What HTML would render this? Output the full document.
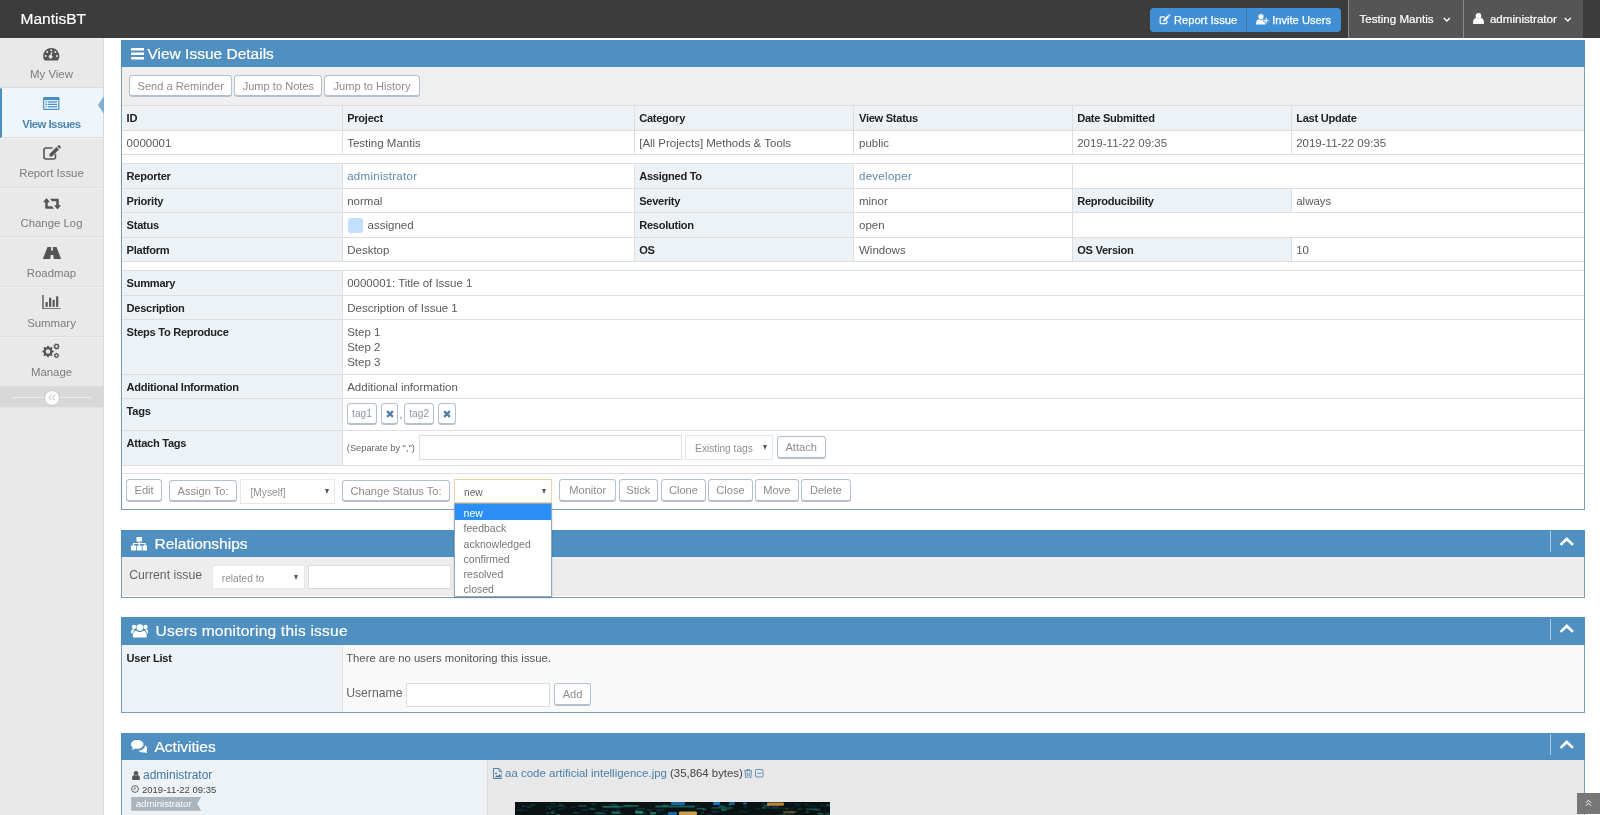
<!DOCTYPE html>
<html lang="en"><head><meta charset="utf-8"><title>0000001: Title of Issue 1 - MantisBT</title>
<style>
*{box-sizing:border-box;margin:0;padding:0}
html,body{width:1600px;height:815px;overflow:hidden;background:#fff}
body{font-family:"Liberation Sans",Arial,sans-serif;font-size:11.5px;color:#555;position:relative}
a{text-decoration:none;color:#5d89ab}
.cell a{letter-spacing:0.28px}
.abs{position:absolute}
#page{position:absolute;left:0;top:0;width:1600px;height:815px;overflow:hidden;will-change:transform}
#navbar{position:absolute;left:0;top:0;width:1600px;height:37.9px;background:#3c3c3c}
#brand{position:absolute;left:20.5px;top:0;line-height:37px;font-size:15.5px;color:#fff;-webkit-text-stroke:0.2px #fff}
.nbtn{position:absolute;top:7.9px;height:24px;background:#408fd5;color:#fff;font-size:11.15px;line-height:24px;white-space:nowrap;-webkit-text-stroke:0.25px #fff}
.nblock{position:absolute;top:0;height:37.9px;background:#555;border-left:1px solid #8a8a8a;color:#fff;font-size:11.6px;line-height:37px;white-space:nowrap;-webkit-text-stroke:0.2px #fff}
#sidebar{position:absolute;left:0;top:37.9px;width:104px;height:778px;background:#e9e9e9;border-right:1px solid #d9d9d9}
.sitem{position:absolute;left:0;width:103px;height:49.75px;border-bottom:1px solid #dcdcdc;border-top:1px solid #f1f1f1;text-align:center;color:#7b7b7b;font-size:11.4px}
.sitem .lbl{position:absolute;left:0;width:103px;text-align:center;top:27.4px;line-height:14px;white-space:nowrap}
.sitem svg{position:absolute}
.sitem.active{background:#eef6fc;color:#4c86b4;border-left:2px solid #4a8fc0;border-top-color:#eef6fc}
.widget{position:absolute;left:121px;width:1464px;border:1px solid #7a9dbb;background:#fff}
.whead{position:absolute;left:-1px;top:-1px;width:1464px;background:#5090c1;color:#fff;font-size:15.5px;white-space:nowrap}
.whead .ttl{position:absolute;top:0;-webkit-text-stroke:0.2px #fff}
.row{position:absolute;left:0;width:1462px;border-top:1px solid #dedede}
.cell{position:absolute;top:0;height:100%;padding:0 0 0 4.6px;white-space:nowrap;border-left:1px solid #dedede;color:#5a5a5a}
.cell.first{border-left:none}
.cat{background:#edf2f6;color:#222;font-weight:bold;letter-spacing:-0.28px;font-size:11.1px}
.t{position:absolute;left:4.6px;top:0;line-height:24px}
.btn{position:absolute;background:#fff;border:1px solid #b4c0cb;border-bottom-width:2px;border-radius:3.5px;color:#8c8c8c;text-align:center;white-space:nowrap;font-size:11.1px}
.sel{position:absolute;background:#fff;border:1px solid #e7e7e7;color:#909090;font-size:10.2px;white-space:nowrap}
.sel .arr{position:absolute;right:5.2px;top:50%;margin-top:-2.5px;width:0;height:0;border-left:2.6px solid transparent;border-right:2.6px solid transparent;border-top:5px solid #555}
.inp{position:absolute;background:#fff;border:1px solid #dedede}
</style></head>
<body>
<div id="page">
<div id="navbar">
<div id="brand">MantisBT</div>
<div class="nbtn" style="left:1150.3px;width:96.3px;border-radius:4px 0 0 4px;border-right:1px solid #3a78b0"><svg width="11.5" height="10.5" viewBox="0 -1.5 21 19.5" style="position:absolute;left:9px;top:6.6px"><path d="M14.5 11V14.5a2 2 0 0 1-2 2H4a2 2 0 0 1-2-2V6a2 2 0 0 1 2-2h6" fill="none" stroke="#fff" stroke-width="2.2" stroke-linecap="round"/><path d="M7.5 9.5 15.6 1.4l3 3L10.5 12.5h-3z M16.6 0.4l1-1a1 1 0 0 1 1.4 0l1.6 1.6a1 1 0 0 1 0 1.4l-1 1z" fill="#fff"/></svg><span style="position:absolute;left:23.7px;top:0">Report Issue</span></div>
<div class="nbtn" style="left:1246.6px;width:94px;border-radius:0 4px 4px 0"><svg width="13" height="10.5" viewBox="0 0 26 21" style="position:absolute;left:9.4px;top:6.6px"><circle cx="10" cy="5.2" r="5.2" fill="#fff"/><path d="M0 19.5c0-6 3-9 6-9 1.2 1 2.5 1.5 4 1.5s2.8-.5 4-1.5c3 0 6 3 6 9 0 1-1 1.5-2 1.5H2c-1 0-2-.5-2-1.5z" fill="#fff"/><path d="M18.5 7.5h3.8v3.8h3.7v3.8h-3.7v3.8h-3.8v-3.8h-3.7v-3.8h3.7z" fill="#fff" stroke="#408fd5" stroke-width="1.4"/></svg><span style="position:absolute;left:25.6px;top:0">Invite Users</span></div>
<div class="nblock" style="left:1348px;width:115.4px"><span style="position:absolute;left:10.5px;top:0">Testing Mantis</span><span style="position:absolute;left:94.2px;top:-1px"><svg width="7.6" height="5" viewBox="0 0 15 10" style=""><path d="M1.5 2 7.5 8l6-6" fill="none" stroke="#fff" stroke-width="2.6"/></svg></span></div>
<div class="nblock" style="left:1463.4px;width:119.8px"><svg width="11" height="11.5" viewBox="0 0 22 23" style="position:absolute;left:9px;top:12.8px"><circle cx="11" cy="5.8" r="5.8" fill="#fff"/><path d="M0 20c0-6.5 3-10 6.5-10 1.3 1.2 2.8 1.8 4.5 1.8s3.2-.6 4.5-1.8c3.5 0 6.5 3.5 6.5 10 0 1.8-1.2 3-3 3H3c-1.8 0-3-1.2-3-3z" fill="#fff"/></svg><span style="position:absolute;left:25.5px;top:0">administrator</span><span style="position:absolute;left:100px;top:-1px"><svg width="7.6" height="5" viewBox="0 0 15 10" style=""><path d="M1.5 2 7.5 8l6-6" fill="none" stroke="#fff" stroke-width="2.6"/></svg></span></div>
</div>
<div id="sidebar">
<div class="sitem" style="top:0.6px"><span style="position:absolute;left:43px;top:9px"><svg width="16.5" height="12.6" viewBox="0 0 36 28" style=""><path d="M18 0a18 18 0 0 0-18 18c0 3.5 1 6.8 2.8 9.5.3.4.7.5 1.2.500h28c.5 0 .9-.1 1.2-.5A18 18 0 0 0 18 0z" fill="#555"/><circle cx="18" cy="5" r="2.2" fill="#e9e9e9"/><circle cx="9" cy="9" r="2.2" fill="#e9e9e9"/><circle cx="5.5" cy="18" r="2.2" fill="#e9e9e9"/><circle cx="27" cy="9" r="2.2" fill="#e9e9e9"/><circle cx="30.5" cy="18" r="2.2" fill="#e9e9e9"/><path d="M20.5 9.5 18.8 16a4 4 0 1 1-2.6-.7L18 8.8z" fill="#e9e9e9"/></svg></span><span class="lbl">My View</span></div>
<div class="sitem active" style="top:50.35px"><span style="position:absolute;left:41.2px;top:7.6px"><svg width="16.5" height="13" viewBox="0 0 34 27" style=""><rect x="0" y="0" width="34" height="27" rx="2.5" fill="#4a8ec2"/><rect x="2.5" y="6.5" width="29" height="18" fill="#eef6fc"/><rect x="5" y="9" width="3" height="2.6" fill="#4a8ec2"/><rect x="10" y="9" width="19" height="2.6" fill="#4a8ec2"/><rect x="5" y="14" width="3" height="2.6" fill="#4a8ec2"/><rect x="10" y="14" width="19" height="2.6" fill="#4a8ec2"/><rect x="5" y="19" width="3" height="2.6" fill="#4a8ec2"/><rect x="10" y="19" width="19" height="2.6" fill="#4a8ec2"/></svg></span><span class="lbl" style="left:-2px;top:27.6px;font-weight:bold;letter-spacing:-0.55px">View Issues</span><span style="position:absolute;right:-1px;top:6.5px;width:0;height:0;border-top:9px solid transparent;border-bottom:9px solid transparent;border-right:6.5px solid #7fb0d0"></span></div>
<div class="sitem" style="top:100.1px"><span style="position:absolute;left:43px;top:6.4px"><svg width="18" height="14.5" viewBox="0 -3 36 29" style=""><path d="M25 16v5a4 4 0 0 1-4 4H6a4 4 0 0 1-4-4V7a4 4 0 0 1 4-4h12" fill="none" stroke="#555" stroke-width="3.2" stroke-linecap="round"/><path d="M13 15 27 1l5 5L18 20h-5z M28.5-.5l2-2a1.5 1.5 0 0 1 2.1 0l2.9 2.9a1.5 1.5 0 0 1 0 2.1l-2 2z" fill="#555"/></svg></span><span class="lbl">Report Issue</span></div>
<div class="sitem" style="top:149.85px"><span style="position:absolute;left:43px;top:9px"><svg width="18" height="11.5" viewBox="0 0 36 23" style=""><path d="M7 0 0 8.5h4.5V20a1.5 1.5 0 0 0 1.5 1.5h16l-4-4.8H9.5V8.5H14z" fill="#555"/><path d="M29 23l7-8.5h-4.5V3A1.5 1.5 0 0 0 30 1.5H14l4 4.8h8.5v8.2H22z" fill="#555"/></svg></span><span class="lbl">Change Log</span></div>
<div class="sitem" style="top:199.6px"><span style="position:absolute;left:43px;top:8.4px"><svg width="18" height="12.5" viewBox="0 0 36 25" style=""><path d="M9 0h7.5l-.6 7h4.2l-.6-7H27l9 23c.3 1-.2 2-1.2 2H21.5l-.9-9h-5.2l-.9 9H1.2C.2 25-.3 24 0 23z" fill="#555"/></svg></span><span class="lbl">Roadmap</span></div>
<div class="sitem" style="top:249.35px"><span style="position:absolute;left:41.5px;top:6.4px"><svg width="19" height="14.6" viewBox="0 0 34 27" style=""><path d="M0 0h2.5v24.5H34V27H0z" fill="#555"/><rect x="6" y="13" width="4" height="9" fill="#555"/><rect x="12.5" y="5" width="4" height="17" fill="#555"/><rect x="19" y="9" width="4" height="13" fill="#555"/><rect x="25.5" y="2.5" width="4" height="19.5" fill="#555"/></svg></span><span class="lbl">Summary</span></div>
<div class="sitem" style="top:299.1px"><span style="position:absolute;left:42.3px;top:5.4px"><svg width="18" height="15" viewBox="0 0 36 30" style=""><path d="M23.44 15.87 L23.44 18.13 L20.58 19.6 L19.91 21.23 L20.89 24.3 L19.3 25.89 L16.23 24.91 L14.6 25.58 L13.13 28.44 L10.87 28.44 L9.4 25.58 L7.77 24.91 L4.7 25.89 L3.11 24.3 L4.09 21.23 L3.42 19.6 L0.56 18.13 L0.56 15.87 L3.42 14.4 L4.09 12.77 L3.11 9.7 L4.7 8.11 L7.77 9.09 L9.4 8.42 L10.87 5.56 L13.13 5.56 L14.6 8.42 L16.23 9.09 L19.3 8.11 L20.89 9.7 L19.91 12.77 L20.58 14.4z" fill="#555"/><circle cx="12" cy="17" r="4.5" fill="#e9e9e9"/><path d="M35.46 6.27 L35.46 7.73 L33.79 8.67 L33.29 9.7 L33.6 11.6 L32.46 12.5 L30.67 11.79 L29.57 12.04 L28.27 13.46 L26.85 13.14 L26.3 11.29 L25.41 10.59 L23.5 10.46 L22.86 9.15 L23.96 7.57 L23.96 6.43 L22.86 4.85 L23.5 3.54 L25.41 3.41 L26.3 2.71 L26.85 0.86 L28.27 0.54 L29.57 1.96 L30.67 2.21 L32.46 1.5 L33.6 2.4 L33.29 4.3 L33.79 5.33z" fill="#555"/><circle cx="29" cy="7" r="2.5" fill="#e9e9e9"/><path d="M34.47 24.38 L34.47 25.62 L33.05 26.42 L32.63 27.28 L32.89 28.89 L31.93 29.66 L30.42 29.05 L29.48 29.26 L28.38 30.47 L27.18 30.19 L26.72 28.63 L25.97 28.03 L24.34 27.93 L23.81 26.82 L24.74 25.48 L24.74 24.52 L23.81 23.18 L24.34 22.07 L25.97 21.97 L26.72 21.37 L27.18 19.81 L28.38 19.53 L29.48 20.74 L30.42 20.95 L31.93 20.34 L32.89 21.11 L32.63 22.72 L33.05 23.58z" fill="#555"/><circle cx="29" cy="25" r="2.2" fill="#e9e9e9"/></svg></span><span class="lbl">Manage</span></div>
<div style="position:absolute;left:0;top:348.9px;width:103px;height:21.5px;background:#d8d8d8;border-bottom:1px solid #e4e4e4"><div style="position:absolute;left:12px;top:10.7px;width:79px;height:1px;background:#ececec"></div><div style="position:absolute;left:43.5px;top:3px;width:16px;height:16px;border-radius:8px;background:#fff;border:1px solid #c9c9c9"></div><svg width="8" height="7" viewBox="0 0 16 14" style="position:absolute;left:47.6px;top:7.6px"><path d="M7 1.5 2 7l5 5.5M14 1.5 9 7l5 5.5" fill="none" stroke="#aaa" stroke-width="1.8"/></svg></div>
</div>
<div class="widget" style="top:40px;height:470px">
<div class="whead" style="height:27px;line-height:27px"><svg width="13.5" height="11.5" viewBox="0 0 27 23" style="position:absolute;left:9.5px;top:8px"><rect y="0" width="27" height="4.8" rx="1" fill="#fff"/><rect y="9" width="27" height="4.8" rx="1" fill="#fff"/><rect y="18" width="27" height="4.8" rx="1" fill="#fff"/></svg><span class="ttl" style="left:26.5px">View Issue Details</span></div>
<div class="abs" style="left:0;top:26px;width:1462px;height:38.5px;background:#efefef;border-bottom:1px solid #d6d6d6"></div>
</div>
<div class="btn" style="left:129px;top:74.7px;width:103.4px;height:22.5px;line-height:20.3px;">Send a Reminder</div>
<div class="btn" style="left:234.4px;top:74.7px;width:88px;height:22.5px;line-height:20.3px;">Jump to Notes</div>
<div class="btn" style="left:324.4px;top:74.7px;width:95.2px;height:22.5px;line-height:20.3px;">Jump to History</div>
<div class="row" style="left:122px;top:104.5px;height:25.5px;width:1462px;"><div class="cell first cat" style="left:0px;width:219.6px"><span class="t" style="line-height:24.4px;">ID</span></div><div class="cell cat" style="left:219.6px;width:292px"><span class="t" style="line-height:24.4px;">Project</span></div><div class="cell cat" style="left:511.6px;width:219.8px"><span class="t" style="line-height:24.4px;">Category</span></div><div class="cell cat" style="left:731.4px;width:218.2px"><span class="t" style="line-height:24.4px;">View Status</span></div><div class="cell cat" style="left:949.6px;width:219px"><span class="t" style="line-height:24.4px;">Date Submitted</span></div><div class="cell cat" style="left:1168.6px;width:293.4px"><span class="t" style="line-height:24.4px;">Last Update</span></div></div>
<div class="row" style="left:122px;top:130px;height:24px;width:1462px;"><div class="cell first" style="left:0px;width:219.6px"><span class="t" style="line-height:24.4px;">0000001</span></div><div class="cell" style="left:219.6px;width:292px"><span class="t" style="line-height:24.4px;">Testing Mantis</span></div><div class="cell" style="left:511.6px;width:219.8px"><span class="t" style="line-height:24.4px;">[All Projects] Methods &amp; Tools</span></div><div class="cell" style="left:731.4px;width:218.2px"><span class="t" style="line-height:24.4px;">public</span></div><div class="cell" style="left:949.6px;width:219px"><span class="t" style="line-height:24.4px;">2019-11-22 09:35</span></div><div class="cell" style="left:1168.6px;width:293.4px"><span class="t" style="line-height:24.4px;">2019-11-22 09:35</span></div></div>
<div class="row" style="left:122px;top:154px;height:9px;width:1462px;"></div>
<div class="row" style="left:122px;top:163px;height:24.8px;width:1462px;"><div class="cell first cat" style="left:0px;width:219.6px"><span class="t" style="line-height:24.4px;">Reporter</span></div><div class="cell" style="left:219.6px;width:292px"><span class="t" style="line-height:24.4px;"><a>administrator</a></span></div><div class="cell cat" style="left:511.6px;width:219.8px"><span class="t" style="line-height:24.4px;">Assigned To</span></div><div class="cell" style="left:731.4px;width:218.2px"><span class="t" style="line-height:24.4px;"><a>developer</a></span></div><div class="cell" style="left:949.6px;width:512.4px"></div></div>
<div class="row" style="left:122px;top:187.8px;height:24.4px;width:1462px;"><div class="cell first cat" style="left:0px;width:219.6px"><span class="t" style="line-height:24.4px;">Priority</span></div><div class="cell" style="left:219.6px;width:292px"><span class="t" style="line-height:24.4px;">normal</span></div><div class="cell cat" style="left:511.6px;width:219.8px"><span class="t" style="line-height:24.4px;">Severity</span></div><div class="cell" style="left:731.4px;width:218.2px"><span class="t" style="line-height:24.4px;">minor</span></div><div class="cell cat" style="left:949.6px;width:219px"><span class="t" style="line-height:24.4px;">Reproducibility</span></div><div class="cell" style="left:1168.6px;width:293.4px"><span class="t" style="line-height:24.4px;">always</span></div></div>
<div class="row" style="left:122px;top:212.2px;height:24.4px;width:1462px;"><div class="cell first cat" style="left:0px;width:219.6px"><span class="t" style="line-height:24.4px;">Status</span></div><div class="cell" style="left:219.6px;width:292px"><span class="abs" style="left:5px;top:4.5px;width:15.5px;height:15.5px;border-radius:2.5px;background:#c2dfff"></span><span class="t" style="line-height:24.4px;left:25px">assigned</span></div><div class="cell cat" style="left:511.6px;width:219.8px"><span class="t" style="line-height:24.4px;">Resolution</span></div><div class="cell" style="left:731.4px;width:218.2px"><span class="t" style="line-height:24.4px;">open</span></div><div class="cell" style="left:949.6px;width:512.4px"></div></div>
<div class="row" style="left:122px;top:236.6px;height:24.4px;width:1462px;"><div class="cell first cat" style="left:0px;width:219.6px"><span class="t" style="line-height:24.4px;">Platform</span></div><div class="cell" style="left:219.6px;width:292px"><span class="t" style="line-height:24.4px;">Desktop</span></div><div class="cell cat" style="left:511.6px;width:219.8px"><span class="t" style="line-height:24.4px;">OS</span></div><div class="cell" style="left:731.4px;width:218.2px"><span class="t" style="line-height:24.4px;">Windows</span></div><div class="cell cat" style="left:949.6px;width:219px"><span class="t" style="line-height:24.4px;">OS Version</span></div><div class="cell" style="left:1168.6px;width:293.4px"><span class="t" style="line-height:24.4px;">10</span></div></div>
<div class="row" style="left:122px;top:261px;height:9.2px;width:1462px;"></div>
<div class="row" style="left:122px;top:270.2px;height:24.6px;width:1462px;"><div class="cell first cat" style="left:0px;width:219.6px"><span class="t" style="line-height:24.4px;">Summary</span></div><div class="cell" style="left:219.6px;width:1242.4px"><span class="t" style="line-height:24.4px;">0000001: Title of Issue 1</span></div></div>
<div class="row" style="left:122px;top:294.8px;height:24.4px;width:1462px;"><div class="cell first cat" style="left:0px;width:219.6px"><span class="t" style="line-height:24.4px;">Description</span></div><div class="cell" style="left:219.6px;width:1242.4px"><span class="t" style="line-height:24.4px;">Description of Issue 1</span></div></div>
<div class="row" style="left:122px;top:319.2px;height:54.6px;width:1462px;"><div class="cell first cat" style="left:0px;width:219.6px"><span class="t" style="line-height:24.4px;">Steps To Reproduce</span></div><div class="cell" style="left:219.6px;width:1242.4px"><span class="t" style="line-height:15.2px;top:4.6px">Step 1<br>Step 2<br>Step 3</span></div></div>
<div class="row" style="left:122px;top:373.8px;height:24px;width:1462px;"><div class="cell first cat" style="left:0px;width:219.6px"><span class="t" style="line-height:24.4px;">Additional Information</span></div><div class="cell" style="left:219.6px;width:1242.4px"><span class="t" style="line-height:24.4px;">Additional information</span></div></div>
<div class="row" style="left:122px;top:397.8px;height:32.2px;width:1462px;"><div class="cell first cat" style="left:0px;width:219.6px"><span class="t" style="line-height:24.4px;">Tags</span></div><div class="cell" style="left:219.6px;width:1242.4px"></div></div>
<div class="row" style="left:122px;top:430px;height:34.6px;width:1462px;"><div class="cell first cat" style="left:0px;width:219.6px"><span class="t" style="line-height:24.4px;">Attach Tags</span></div><div class="cell" style="left:219.6px;width:1242.4px"></div></div>
<div class="row" style="left:122px;top:464.6px;height:8.8px;width:1462px;"></div>
<div class="row" style="left:122px;top:473.4px;height:35.6px;width:1462px;"></div>
<div class="btn" style="left:347px;top:403.1px;width:30px;height:22.1px;line-height:19.6px;font-size:10.2px;color:#8a99a8">tag1</div>
<div class="btn" style="left:380.5px;top:403.1px;width:17.6px;height:22.1px;line-height:19.6px;font-size:10.2px;color:#8a99a8"><svg width="8" height="8" viewBox="0 0 14 14" style="position:absolute;left:4.3px;top:6px"><path d="M2 2l10 10M12 2l-10 10" stroke="#4d7ea8" stroke-width="4"/></svg></div>
<span class="abs" style="left:399.5px;top:409px;font-size:10px;color:#777">,</span>
<div class="btn" style="left:404.2px;top:403.1px;width:30px;height:22.1px;line-height:19.6px;font-size:10.2px;color:#8a99a8">tag2</div>
<div class="btn" style="left:438px;top:403.1px;width:17.6px;height:22.1px;line-height:19.6px;font-size:10.2px;color:#8a99a8"><svg width="8" height="8" viewBox="0 0 14 14" style="position:absolute;left:4.3px;top:6px"><path d="M2 2l10 10M12 2l-10 10" stroke="#4d7ea8" stroke-width="4"/></svg></div>
<span class="abs" style="left:346.8px;top:441.5px;font-size:9.3px;line-height:12px;color:#666;white-space:nowrap">(Separate by ",")</span>
<div class="inp" style="left:419.2px;top:435px;width:262.5px;height:25.2px"></div>
<div class="sel" style="left:684.6px;top:435.1px;width:88.8px;height:25.4px;line-height:24.4px;"><span style="position:absolute;left:9.5px;top:1px">Existing tags</span><span class="arr"></span></div>
<div class="btn" style="left:776.5px;top:436.2px;width:49.4px;height:22.7px;line-height:20.5px;">Attach</div>
<div class="btn" style="left:126.2px;top:479.3px;width:35.8px;height:22.5px;line-height:20.3px;">Edit</div>
<div class="btn" style="left:169.2px;top:479.9px;width:67.8px;height:22.5px;line-height:20.3px;">Assign To:</div>
<div class="sel" style="left:240px;top:479.4px;width:95px;height:24.4px;line-height:23.4px;"><span style="position:absolute;left:9.5px;top:1px">[Myself]</span><span class="arr"></span></div>
<div class="btn" style="left:342px;top:479.9px;width:108px;height:22.5px;line-height:20.3px;">Change Status To:</div>
<div class="sel" style="left:454.4px;top:479.3px;width:97.7px;height:24.2px;line-height:23.2px;border-color:#efd3a8;color:#666"><span style="position:absolute;left:8.6px;top:1px">new</span><span class="arr"></span></div>
<div class="btn" style="left:559.4px;top:479.3px;width:56.7px;height:22.5px;line-height:20.3px;">Monitor</div>
<div class="btn" style="left:618.5px;top:479.3px;width:39.6px;height:22.5px;line-height:20.3px;">Stick</div>
<div class="btn" style="left:660.6px;top:479.3px;width:45.7px;height:22.5px;line-height:20.3px;">Clone</div>
<div class="btn" style="left:708.4px;top:479.3px;width:44.2px;height:22.5px;line-height:20.3px;">Close</div>
<div class="btn" style="left:754.8px;top:479.3px;width:43.9px;height:22.5px;line-height:20.3px;">Move</div>
<div class="btn" style="left:801.2px;top:479.3px;width:49.6px;height:22.5px;line-height:20.3px;">Delete</div>
<div class="widget" style="top:529.5px;height:68px">
<div class="whead" style="height:27.5px;line-height:27.5px"><svg width="16.5" height="13.5" viewBox="0 0 33 27" style="position:absolute;left:9.5px;top:7.5px"><rect x="11" y="0" width="11" height="9" rx="1" fill="#fff"/><rect x="0" y="17" width="10" height="10" rx="1" fill="#fff"/><rect x="11.5" y="17" width="10" height="10" rx="1" fill="#fff"/><rect x="23" y="17" width="10" height="10" rx="1" fill="#fff"/><path d="M5 17v-4h23V17M16.5 9v8" fill="none" stroke="#fff" stroke-width="2.4"/></svg><span class="ttl" style="left:33.5px">Relationships</span><span class="abs" style="left:1428.6px;top:1.5px;width:1px;height:21px;background:#a9cfee"></span><span class="abs" style="left:1438.4px;top:7.4px;line-height:0"><svg width="15.5" height="9.5" viewBox="0 0 30 18" style=""><path d="M3 15 15 3.5 27 15" fill="none" stroke="#fff" stroke-width="5.2"/></svg></span></div>
<div class="abs" style="left:0;top:26.5px;width:1462px;height:39px;background:#ededed"></div>
</div>
<span class="abs" style="left:129.2px;top:567.2px;font-size:12.25px;line-height:16px;color:#666;white-space:nowrap">Current issue</span>
<div class="sel" style="left:211.8px;top:565px;width:92.8px;height:24px;line-height:23px;"><span style="position:absolute;left:9px;top:1px">related to</span><span class="arr"></span></div>
<div class="inp" style="left:307.5px;top:565px;width:143.5px;height:24px"></div>
<div class="widget" style="top:617px;height:95.8px">
<div class="whead" style="height:27.6px;line-height:27.6px"><svg width="17.5" height="14" viewBox="0 0 35 28" style="position:absolute;left:9.5px;top:7px"><circle cx="17.5" cy="7" r="6.5" fill="#fff"/><path d="M6 27c-1.5 0-2.5-1-2.5-2.5 0-7 3-11 7-11 2 1.8 4.3 2.6 7 2.6s5-.8 7-2.6c4 0 7 4 7 11 0 1.5-1 2.5-2.5 2.5z" fill="#fff"/><circle cx="6" cy="6" r="4.3" fill="#fff"/><circle cx="29" cy="6" r="4.3" fill="#fff"/><path d="M0 17c0-4 1.5-6.5 4-6.5 1 .8 2.3 1.3 3.5 1.4-2.5 1.5-4 4-4.5 7H1.5C.6 18.9 0 18.2 0 17zM35 17c0-4-1.5-6.5-4-6.5-1 .8-2.3 1.3-3.5 1.4 2.5 1.5 4 4 4.5 7h1.5c.9 0 1.5-.7 1.5-1.9z" fill="#fff"/></svg><span class="ttl" style="left:34.5px;letter-spacing:0.23px">Users monitoring this issue</span><span class="abs" style="left:1428.6px;top:1.5px;width:1px;height:21px;background:#a9cfee"></span><span class="abs" style="left:1438.4px;top:7.4px;line-height:0"><svg width="15.5" height="9.5" viewBox="0 0 30 18" style=""><path d="M3 15 15 3.5 27 15" fill="none" stroke="#fff" stroke-width="5.2"/></svg></span></div>
<div class="abs" style="left:0;top:26.6px;width:220.5px;height:67.2px;background:#edf2f6;border-right:1px solid #dedede"></div>
<div class="abs" style="left:220.5px;top:26.6px;width:1241.5px;height:67.2px;background:#f9f9f9"></div>
</div>
<span class="abs cat" style="background:none;left:126.6px;top:650px;line-height:16px;white-space:nowrap">User List</span>
<span class="abs" style="left:346.2px;top:650px;line-height:16px;white-space:nowrap;color:#555;font-size:11.3px">There are no users monitoring this issue.</span>
<span class="abs" style="left:346.2px;top:684.5px;font-size:12.2px;line-height:16px;color:#666;white-space:nowrap">Username</span>
<div class="inp" style="left:406.2px;top:682.5px;width:144.3px;height:24px"></div>
<div class="btn" style="left:554px;top:683.3px;width:37px;height:22.6px;line-height:20.4px;">Add</div>
<div class="widget" style="top:732.5px;height:90px;border-bottom:none">
<div class="whead" style="height:27.3px;line-height:27.3px"><svg width="16.5" height="13.5" viewBox="0 0 33 27" style="position:absolute;left:9.5px;top:7.5px"><path d="M12.5 0C5.6 0 0 4 0 9c0 2.6 1.5 5 4 6.6-.4 1.6-1.4 3-2.6 4.1 2.6-.2 5-1.2 6.8-2.7 1.4.3 2.8.5 4.3.5 6.9 0 12.5-4 12.5-9S19.4 0 12.5 0z" fill="#fff"/><path d="M28 11c0 5.5-5.8 10-13 10.5 2 2 5.2 3.3 8.5 3.3 1.2 0 2.4-.2 3.5-.5 1.5 1.3 3.5 2.2 5.8 2.4-1-1-1.8-2.1-2.2-3.5C32.7 21.8 33 20 33 18c0-3-2-5.6-5-7z" fill="#fff"/></svg><span class="ttl" style="left:33.5px">Activities</span><span class="abs" style="left:1428.6px;top:1.5px;width:1px;height:21px;background:#a9cfee"></span><span class="abs" style="left:1438.4px;top:7.4px;line-height:0"><svg width="15.5" height="9.5" viewBox="0 0 30 18" style=""><path d="M3 15 15 3.5 27 15" fill="none" stroke="#fff" stroke-width="5.2"/></svg></span></div>
<div class="abs" style="left:0;top:26.3px;width:366px;height:62.7px;background:#edf2f6;border-right:1px solid #dedede"></div>
<div class="abs" style="left:366px;top:26.3px;width:1096px;height:62.7px;background:#e8e8e8"></div>
</div>
<svg width="8" height="9" viewBox="0 0 16 18" style="position:absolute;left:131.5px;top:770.5px"><circle cx="8" cy="4.5" r="4.5" fill="#555"/><path d="M0 15.5c0-5 2.2-7.5 4.8-7.5 1 .9 2 1.3 3.2 1.3s2.2-.4 3.2-1.3c2.6 0 4.8 2.5 4.8 7.5 0 1.5-1 2.5-2.5 2.5h-11C1 18 0 17 0 15.5z" fill="#555"/></svg>
<a class="abs" style="left:143px;top:767.5px;font-size:12px;line-height:15px;white-space:nowrap;color:#3f79a8">administrator</a>
<svg width="8" height="8" viewBox="0 0 16 16" style="position:absolute;left:131.3px;top:785.3px"><circle cx="8" cy="8" r="6.8" fill="none" stroke="#555" stroke-width="1.8"/><path d="M8 4v4.5H5" fill="none" stroke="#555" stroke-width="1.6"/></svg>
<span class="abs" style="left:142px;top:782.8px;font-size:9.5px;line-height:13px;white-space:nowrap;color:#444">2019-11-22 09:35</span>
<div class="abs" style="left:131.2px;top:796.8px;width:70px;height:14px;background:#a9b4bd;color:#fff;font-size:9.7px;line-height:13.5px;padding-left:4.5px;white-space:nowrap;clip-path:polygon(0 0,100% 0,calc(100% - 4px) 50%,100% 100%,0 100%)">administrator</div>
<svg width="9.5" height="11" viewBox="0 0 19 22" style="position:absolute;left:492.5px;top:768px"><path d="M1 1h11l6 6v14H1z" fill="none" stroke="#3f79a8" stroke-width="1.8"/><path d="M12 1v6h6" fill="none" stroke="#3f79a8" stroke-width="1.5"/><circle cx="6" cy="11" r="1.8" fill="#3f79a8"/><path d="M3.5 18.5l4-4 2 2 3.5-4.5 2.5 3v3.5z" fill="#3f79a8"/></svg>
<a class="abs" style="left:505px;top:766.3px;font-size:11.47px;line-height:15px;white-space:nowrap;color:#4b7fa9">aa code artificial intelligence.jpg</a>
<span class="abs" style="left:670px;top:766.3px;font-size:11.4px;line-height:15px;white-space:nowrap;color:#444">(35,864 bytes)</span>
<svg width="8.5" height="9.5" viewBox="0 0 17 19" style="position:absolute;left:743.6px;top:768.5px"><path d="M0 3.5h17M5.5 3V1h6v2M2.2 4l1 14h10.6l1-14M6.5 7v8M10.5 7v8" fill="none" stroke="#4b7fa9" stroke-width="1.7"/></svg>
<svg width="8.5" height="8.5" viewBox="0 0 17 17" style="position:absolute;left:755.4px;top:769.3px"><rect x="1" y="1" width="15" height="15" rx="2" fill="none" stroke="#4b7fa9" stroke-width="1.7"/><path d="M4.5 8.5h8" stroke="#4b7fa9" stroke-width="1.7"/></svg>
<svg class="abs" style="left:514.8px;top:802.2px" width="315.4" height="13" viewBox="0 0 315.4 13"><rect width="316" height="13" fill="#0a1214"/><rect x="141.1" y="7.4" width="8.5" height="1.6" fill="#0f3d46" opacity="0.72"/><rect x="59.2" y="10.2" width="5.3" height="1.7" fill="#1a6a62" opacity="0.3"/><rect x="94.7" y="2" width="7.7" height="1.8" fill="#14524f" opacity="0.58"/><rect x="123.6" y="6.2" width="7.2" height="1.8" fill="#0f3d46" opacity="0.26"/><rect x="164.9" y="1.7" width="3.3" height="1.3" fill="#14524f" opacity="0.68"/><rect x="101.8" y="7.8" width="3.4" height="1.3" fill="#11485c" opacity="0.52"/><rect x="206.7" y="6.3" width="3.9" height="2.2" fill="#14524f" opacity="0.64"/><rect x="98.4" y="3.6" width="4" height="1.1" fill="#14524f" opacity="0.47"/><rect x="264.1" y="5.4" width="8.7" height="2" fill="#14524f" opacity="0.37"/><rect x="289.2" y="1.6" width="4.6" height="1.9" fill="#1d7468" opacity="0.29"/><rect x="196.4" y="10" width="3.9" height="1.1" fill="#11485c" opacity="0.26"/><rect x="127.9" y="11.6" width="2.9" height="1.8" fill="#14524f" opacity="0.28"/><rect x="248.7" y="3" width="5.9" height="1.5" fill="#1a6a62" opacity="0.79"/><rect x="240.1" y="5.8" width="4.7" height="1.5" fill="#1a6a62" opacity="0.25"/><rect x="269.7" y="12.2" width="6.1" height="2.2" fill="#14524f" opacity="0.37"/><rect x="123" y="10.8" width="6.5" height="1.1" fill="#1a6a62" opacity="0.37"/><rect x="80.6" y="9.9" width="4.3" height="1.4" fill="#14524f" opacity="0.29"/><rect x="65.1" y="8.3" width="2.1" height="1.4" fill="#0f3d46" opacity="0.5"/><rect x="299.3" y="6.6" width="6" height="2" fill="#1a6a62" opacity="0.59"/><rect x="97" y="3.6" width="6.3" height="1.9" fill="#1a6a62" opacity="0.66"/><rect x="293.4" y="3.3" width="8.7" height="2.1" fill="#0f3d46" opacity="0.29"/><rect x="14.8" y="2.3" width="5.6" height="1.3" fill="#17605a" opacity="0.64"/><rect x="80.2" y="10.5" width="6.2" height="1.4" fill="#1a6a62" opacity="0.76"/><rect x="304.9" y="2.5" width="5.4" height="1.8" fill="#0f3d46" opacity="0.59"/><rect x="87.4" y="11.5" width="3.4" height="1" fill="#11485c" opacity="0.48"/><rect x="77.7" y="1.5" width="4" height="1.6" fill="#1a6a62" opacity="0.3"/><rect x="43.2" y="6.2" width="4.3" height="1.9" fill="#0f3d46" opacity="0.57"/><rect x="43.8" y="1.4" width="2.1" height="2.1" fill="#17605a" opacity="0.42"/><rect x="10.5" y="7.9" width="2.5" height="1.1" fill="#11485c" opacity="0.43"/><rect x="311.8" y="1.9" width="5.8" height="1.9" fill="#17605a" opacity="0.66"/><rect x="40.4" y="12.1" width="4.4" height="1.1" fill="#1d7468" opacity="0.75"/><rect x="271.8" y="5.8" width="7.5" height="2" fill="#0f3d46" opacity="0.26"/><rect x="206.6" y="5.4" width="2.1" height="1.1" fill="#14524f" opacity="0.6"/><rect x="309.9" y="11.1" width="7.1" height="1.5" fill="#17605a" opacity="0.63"/><rect x="142.8" y="6.3" width="5.8" height="1.6" fill="#0f3d46" opacity="0.27"/><rect x="187.6" y="6.5" width="3.6" height="1.8" fill="#1d7468" opacity="0.68"/><rect x="206" y="6.6" width="8.3" height="1.4" fill="#1a6a62" opacity="0.62"/><rect x="63.2" y="3" width="8.3" height="1.8" fill="#1d7468" opacity="0.52"/><rect x="75.3" y="5.7" width="3.8" height="1.8" fill="#1a6a62" opacity="0.73"/><rect x="119.9" y="7.7" width="4.2" height="1.2" fill="#1d7468" opacity="0.44"/><rect x="279.4" y="1.5" width="2.4" height="2.2" fill="#1a6a62" opacity="0.31"/><rect x="147.1" y="11.6" width="7.8" height="1.5" fill="#0f3d46" opacity="0.52"/><rect x="98.4" y="10.6" width="8.9" height="1.5" fill="#14524f" opacity="0.71"/><rect x="86.8" y="8" width="6.7" height="1.3" fill="#11485c" opacity="0.42"/><rect x="247" y="1.2" width="3" height="1.5" fill="#14524f" opacity="0.67"/><rect x="83.1" y="10" width="7.6" height="2.2" fill="#14524f" opacity="0.5"/><rect x="196.5" y="8.5" width="7.7" height="2.2" fill="#17605a" opacity="0.36"/><rect x="257" y="3.9" width="7" height="1.9" fill="#0f3d46" opacity="0.64"/><rect x="55.9" y="4.1" width="4.4" height="1.8" fill="#0f3d46" opacity="0.53"/><rect x="311" y="2.8" width="7.9" height="1.8" fill="#1a6a62" opacity="0.3"/><rect x="291" y="9.3" width="2.9" height="1.5" fill="#17605a" opacity="0.74"/><rect x="2.1" y="7.3" width="6.6" height="1.6" fill="#11485c" opacity="0.51"/><rect x="203.2" y="3.4" width="7.1" height="2" fill="#17605a" opacity="0.76"/><rect x="38.5" y="3.8" width="4.7" height="1.1" fill="#11485c" opacity="0.55"/><rect x="246.7" y="4.7" width="8.4" height="2" fill="#11485c" opacity="0.53"/><rect x="11.6" y="4.9" width="4.9" height="1.3" fill="#14524f" opacity="0.37"/><rect x="270.7" y="5.9" width="2.2" height="1.6" fill="#17605a" opacity="0.68"/><rect x="43.8" y="2.7" width="5.6" height="1.9" fill="#17605a" opacity="0.63"/><rect x="295.1" y="6.7" width="8.6" height="1.1" fill="#1a6a62" opacity="0.49"/><rect x="174.3" y="10.6" width="5.9" height="1.2" fill="#0f3d46" opacity="0.71"/><rect x="174.7" y="4.6" width="4.7" height="2" fill="#0f3d46" opacity="0.36"/><rect x="265.4" y="12.1" width="5.7" height="1.7" fill="#1a6a62" opacity="0.48"/><rect x="35.7" y="1.1" width="4.6" height="1.6" fill="#14524f" opacity="0.53"/><rect x="125" y="10.2" width="5.9" height="1.6" fill="#17605a" opacity="0.34"/><rect x="290.4" y="6.3" width="8.4" height="2" fill="#1d7468" opacity="0.4"/><rect x="147.6" y="2.5" width="5" height="2" fill="#1d7468" opacity="0.54"/><rect x="33.9" y="5.8" width="2.2" height="1.3" fill="#17605a" opacity="0.68"/><rect x="7.1" y="3.2" width="3.6" height="1.8" fill="#11485c" opacity="0.65"/><rect x="76.3" y="6.7" width="5.5" height="1.7" fill="#0f3d46" opacity="0.59"/><rect x="223.9" y="9.1" width="8.2" height="1" fill="#17605a" opacity="0.48"/><rect x="165.2" y="2.8" width="3.4" height="1.8" fill="#17605a" opacity="0.37"/><rect x="67.4" y="7.2" width="6.1" height="1.2" fill="#17605a" opacity="0.6"/><rect x="108.4" y="3.1" width="6.2" height="2.1" fill="#1a6a62" opacity="0.37"/><rect x="311.5" y="11.2" width="2.9" height="1.3" fill="#17605a" opacity="0.3"/><rect x="121" y="6" width="8.6" height="1.7" fill="#17605a" opacity="0.32"/><rect x="125.7" y="8.9" width="2.1" height="1.2" fill="#17605a" opacity="0.45"/><rect x="256.1" y="5.2" width="6.9" height="1.8" fill="#11485c" opacity="0.53"/><rect x="213.9" y="3.2" width="2.5" height="1.1" fill="#14524f" opacity="0.67"/><rect x="191.4" y="11.4" width="5.4" height="1.2" fill="#14524f" opacity="0.36"/><rect x="262.1" y="12.4" width="8.5" height="1.1" fill="#14524f" opacity="0.32"/><rect x="212.5" y="1.9" width="2.7" height="1.5" fill="#1d7468" opacity="0.53"/><rect x="134.2" y="7.9" width="2.1" height="1.8" fill="#1a6a62" opacity="0.35"/><rect x="141.6" y="9.5" width="4.8" height="1.2" fill="#1a6a62" opacity="0.3"/><rect x="247.2" y="4.7" width="2.6" height="2" fill="#17605a" opacity="0.77"/><rect x="177.7" y="3.2" width="6.1" height="1.4" fill="#11485c" opacity="0.4"/><rect x="36.3" y="9.5" width="3.1" height="2.1" fill="#1a6a62" opacity="0.74"/><rect x="274.5" y="9" width="7.4" height="1.9" fill="#1d7468" opacity="0.36"/><rect x="57.7" y="10.2" width="4.1" height="1.1" fill="#11485c" opacity="0.79"/><rect x="281.6" y="1.6" width="3.9" height="2.2" fill="#11485c" opacity="0.44"/><rect x="205.8" y="7.6" width="5.7" height="1.5" fill="#1d7468" opacity="0.6"/><rect x="218.8" y="9.8" width="8.9" height="1" fill="#0f3d46" opacity="0.31"/><rect x="74" y="6.1" width="5.5" height="1.9" fill="#17605a" opacity="0.46"/><rect x="30.7" y="3.9" width="8.3" height="1.7" fill="#0f3d46" opacity="0.48"/><rect x="162.5" y="10.7" width="2.7" height="1.5" fill="#17605a" opacity="0.29"/><rect x="186.4" y="9.7" width="2.3" height="2.1" fill="#1a6a62" opacity="0.46"/><rect x="302.7" y="10.8" width="5.8" height="1.7" fill="#1d7468" opacity="0.77"/><rect x="131.3" y="7.1" width="6.2" height="1.4" fill="#11485c" opacity="0.52"/><rect x="84.2" y="11.7" width="6.6" height="1.9" fill="#14524f" opacity="0.26"/><rect x="76.4" y="1.5" width="3.1" height="1.9" fill="#1d7468" opacity="0.28"/><rect x="98.3" y="5.6" width="6.1" height="1.9" fill="#11485c" opacity="0.29"/><rect x="282.5" y="5.9" width="5.3" height="2.2" fill="#1a6a62" opacity="0.27"/><rect x="30.7" y="10.3" width="8.4" height="1.2" fill="#1a6a62" opacity="0.58"/><rect x="35.9" y="8.2" width="5.2" height="1.2" fill="#14524f" opacity="0.45"/><rect x="48.3" y="5.2" width="3" height="1.5" fill="#0f3d46" opacity="0.39"/><rect x="181.7" y="5.8" width="7.4" height="1.6" fill="#1a6a62" opacity="0.77"/><rect x="229.1" y="3.7" width="2.8" height="2.1" fill="#0f3d46" opacity="0.59"/><rect x="112.1" y="4.1" width="6.8" height="1.7" fill="#0f3d46" opacity="0.35"/><rect x="86.9" y="3.8" width="8.7" height="1.6" fill="#17605a" opacity="0.75"/><rect x="274.2" y="1.5" width="2.4" height="1.3" fill="#1d7468" opacity="0.26"/><rect x="11.9" y="3.6" width="3.9" height="1.9" fill="#17605a" opacity="0.34"/><rect x="156" y="0" width="14" height="3" rx="1" fill="#1c6fb5" opacity="0.9"/><rect x="198" y="0" width="7" height="3" rx="1" fill="#1f7fc8" opacity="0.9"/><rect x="214" y="0" width="6" height="3" rx="1" fill="#1a6cb0" opacity="0.8"/><rect x="228" y="0.5" width="4" height="2" rx="1" fill="#2a86c8" opacity="0.7"/><rect x="252" y="0.5" width="17" height="3.2" rx="1" fill="#c9913f" opacity="0.9"/><rect x="164" y="9.5" width="18" height="3.5" rx="1" fill="#d9a650" opacity="0.95"/><rect x="153" y="10" width="9" height="3" rx="1" fill="#1f74bd" opacity="0.85"/><rect x="120" y="9" width="8" height="2.5" rx="1" fill="#21a08c" opacity="0.8"/><rect x="135" y="10" width="6" height="2.5" rx="1" fill="#1f9a86" opacity="0.7"/><rect x="96" y="9.5" width="9" height="2" rx="1" fill="#1f8f80" opacity="0.7"/><rect x="140" y="3.5" width="40" height="2" rx="1" fill="#1b8f80" opacity="0.6"/><rect x="88" y="4" width="20" height="1.8" rx="1" fill="#1b8576" opacity="0.55"/><rect x="108" y="3" width="16" height="1.8" rx="1" fill="#1d8b7c" opacity="0.6"/><rect x="196" y="5" width="22" height="1.8" rx="1" fill="#177468" opacity="0.5"/><rect x="268" y="9" width="12" height="2.5" rx="1" fill="#8a6a2c" opacity="0.6"/></svg>
<div class="abs" style="left:454.4px;top:503.3px;width:97.7px;height:93.8px;background:#fff;border:1px solid #8fa9c2;box-shadow:0 1px 2px rgba(0,0,0,.2)"></div>
<div class="abs" style="left:455.4px;top:504.2px;width:95.7px;height:15.8px;background:#2a8ff5"></div>
<span class="abs" style="left:463.6px;top:506.2px;line-height:14.8px;font-size:10.5px;white-space:nowrap;color:#fff">new</span>
<span class="abs" style="left:463.6px;top:521.4px;line-height:14.8px;font-size:10.5px;white-space:nowrap;color:#777">feedback</span>
<span class="abs" style="left:463.6px;top:536.6px;line-height:14.8px;font-size:10.5px;white-space:nowrap;color:#777">acknowledged</span>
<span class="abs" style="left:463.6px;top:551.8px;line-height:14.8px;font-size:10.5px;white-space:nowrap;color:#777">confirmed</span>
<span class="abs" style="left:463.6px;top:567px;line-height:14.8px;font-size:10.5px;white-space:nowrap;color:#777">resolved</span>
<span class="abs" style="left:463.6px;top:582.2px;line-height:14.8px;font-size:10.5px;white-space:nowrap;color:#777">closed</span>
<div class="abs" style="left:1577px;top:793px;width:23px;height:20.6px;background:#777"></div>
<svg width="7" height="8" viewBox="0 0 14 16" style="position:absolute;left:1584.5px;top:799px"><path d="M2 7.5 7 2.5l5 5M2 13.5 7 8.5l5 5" fill="none" stroke="#fff" stroke-width="2"/></svg>
</div>
</body></html>
